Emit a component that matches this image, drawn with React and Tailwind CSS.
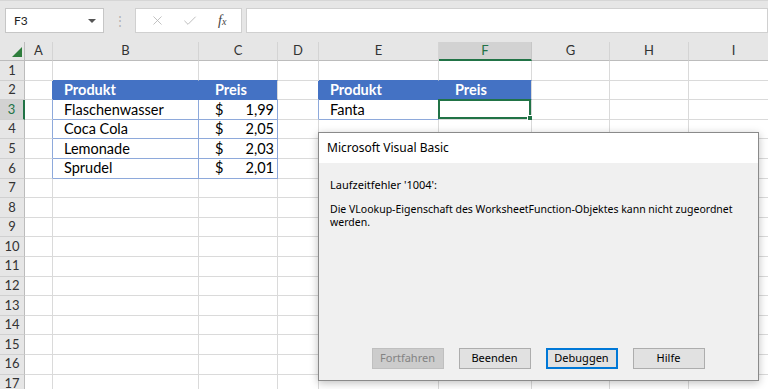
import React from "react";
import { X, Check } from "lucide-react";

const cols = [
  { key: "A", w: "w-[28px]" },
  { key: "B", w: "w-[146px]" },
  { key: "C", w: "w-[79px]" },
  { key: "D", w: "w-[41px]" },
  { key: "E", w: "w-[120px]" },
  { key: "F", w: "w-[93px]" },
  { key: "G", w: "w-[78px]" },
  { key: "H", w: "w-[79px]" },
  { key: "I", w: "w-[90px]" },
];

const produkte = {
  3: ["Flaschenwasser", "1,99"],
  4: ["Coca Cola", "2,05"],
  5: ["Lemonade", "2,03"],
  6: ["Sprudel", "2,01"],
};

function cellStyle(r, key) {
  // Standard-Gitternetz
  let bg = "bg-white";
  let right = "border-r-[#dadada]";
  let bottom = "border-b-[#dadada]";

  if (r === 2 && (key === "B" || key === "C" || key === "E" || key === "F")) {
    bg = "bg-[#4472c4]";
    right = key === "B" || key === "E" ? "border-r-[#4472c4]" : "border-r-[#dadada]";
    bottom = "border-b-[#4472c4]";
  }
  if (r >= 3 && r <= 6) {
    if (key === "A" || key === "B" || key === "C") right = "border-r-[#8ea9db]";
    if (key === "B" || key === "C") bottom = "border-b-[#8ea9db]";
  }
  if (r === 3) {
    if (key === "D" || key === "E") right = "border-r-[#8ea9db]";
    if (key === "E") bottom = "border-b-[#8ea9db]";
  }
  if (r === 2 && key === "A") right = "border-r-[#4472c4]";
  if (r === 2 && key === "D") right = "border-r-[#4472c4]";
  if (r === 1 && (key === "B" || key === "C" || key === "E" || key === "F")) bottom = "border-b-[#4472c4]";

  return `border-r border-b ${right} ${bottom} ${bg}`;
}

function CellContent({ r, keyName }) {
  if (r === 2 && (keyName === "B" || keyName === "E")) {
    return <span className="pl-[11px] font-bold text-white">Produkt</span>;
  }
  if (r === 2 && (keyName === "C" || keyName === "F")) {
    return <span className="pl-[16px] font-bold text-white">Preis</span>;
  }
  if (produkte[r] && keyName === "B") {
    return <span className="pl-[11px] text-black">{produkte[r][0]}</span>;
  }
  if (produkte[r] && keyName === "C") {
    return (
      <div className="flex w-full justify-between pl-[16px] pr-[3px] text-black">
        <span>$</span>
        <span>{produkte[r][1]}</span>
      </div>
    );
  }
  if (r === 3 && keyName === "E") {
    return <span className="pl-[11px] text-black">Fanta</span>;
  }
  if (r === 3 && keyName === "F") {
    return (
      <div className="absolute -left-[1px] -top-[1px] h-[calc(100%+1px)] w-[calc(100%+1px)] border-2 border-[#217346]">
        <div className="absolute -bottom-[4px] -right-[4px] h-[6px] w-[6px] border border-white bg-[#217346]" />
      </div>
    );
  }
  return null;
}

function Toolbar() {
  return (
    <div className="flex h-[42px] items-start border-t border-[#d6d6d6] bg-[#e6e6e6] pt-[7px]">
      <div className="ml-[5px] flex h-[25px] w-[99px] items-center justify-between border border-[#c6c6c6] bg-white pl-[8px] pr-[7px] text-[12px] text-[#222]">
        <span>F3</span>
        <span className="h-0 w-0 border-x-[4px] border-t-[4px] border-x-transparent border-t-[#555]" />
      </div>
      <div className="flex h-[25px] w-[31px] items-center justify-center text-[12px] text-[#b0b0b0]">⋮</div>
      <div className="flex h-[25px] w-[107px] items-center border border-[#d0d0d0] bg-white pl-[14px] text-[#b4b4b4]">
        <X size={15} strokeWidth={1.3} />
        <Check size={16} strokeWidth={1.3} className="ml-[17px]" />
        <span className="ml-[20px] font-['Liberation_Serif',serif] text-[14px] italic text-[#444]">
          f<span className="text-[10px]">x</span>
        </span>
      </div>
      <div className="ml-[4px] h-[25px] flex-1 border border-[#d0d0d0] bg-white" />
    </div>
  );
}

function ColumnHeader() {
  return (
    <div className="flex h-[19px] bg-[#e6e6e6]">
      <div className="flex w-[25px] shrink-0 items-end justify-end border-r border-b border-[#bcbcbc] pb-[3px] pr-[2px]">
        <svg width="10" height="10" viewBox="0 0 10 10">
          <polygon points="10,0 10,10 0,10" fill="#2e7d3c" />
        </svg>
      </div>
      {cols.map((c) =>
        c.key === "F" ? (
          <div
            key={c.key}
            className={`${c.w} flex shrink-0 items-center justify-center border-r border-b-2 border-r-[#c6c6c6] border-b-[#217346] bg-[#d2d2d2] text-[13px] text-[#217346]`}
          >
            {c.key}
          </div>
        ) : (
          <div
            key={c.key}
            className={`${c.w} flex shrink-0 items-center justify-center border-r border-b border-r-[#d4d4d4] border-b-[#bcbcbc] text-[13px] text-[#333]`}
          >
            {c.key}
          </div>
        )
      )}
    </div>
  );
}

function Row({ r }) {
  const selected = r === 3;
  return (
    <div className="flex h-[19.6px] shrink-0">
      <div
        className={
          selected
            ? "flex w-[25px] shrink-0 items-center justify-center border-b border-r-2 border-b-[#d0d0d0] border-r-[#217346] bg-[#d2d2d2] text-[13px] text-[#217346]"
            : "flex w-[25px] shrink-0 items-center justify-center border-b border-r border-b-[#d0d0d0] border-r-[#bcbcbc] bg-[#e6e6e6] text-[13px] text-[#333]"
        }
      >
        {r}
      </div>
      {cols.map((c) => (
        <div
          key={c.key}
          className={`${c.w} relative flex shrink-0 items-center ${cellStyle(r, c.key)}`}
        >
          <CellContent r={r} keyName={c.key} />
        </div>
      ))}
    </div>
  );
}

function FehlerDialog() {
  return (
    <div className="absolute left-[318px] top-[132px] flex h-[249px] w-[441px] flex-col border border-[#8a8a8a] bg-[#f0f0f0] font-['Noto_Sans',sans-serif] text-[11px] text-black shadow-[0_2px_8px_rgba(0,0,0,0.25)]">
      <div className="flex h-[30px] items-center bg-white pl-[8px] text-[12px]">Microsoft Visual Basic</div>
      <div className="flex flex-1 flex-col pl-[11px] pt-[15px]">
        <p className="leading-[14px]">Laufzeitfehler '1004':</p>
        <p className="mt-[11px] pr-[22px] text-[10.5px] leading-[13px]">
          Die VLookup-Eigenschaft des WorksheetFunction-Objektes kann nicht zugeordnet werden.
        </p>
      </div>
      <div className="flex justify-center gap-[15px] pb-[11px] pr-[1px]">
        <button className="h-[21px] w-[72px] border border-[#bfbfbf] bg-[#cccccc] text-[#838383]">Fortfahren</button>
        <button className="h-[21px] w-[72px] border border-[#adadad] bg-[#e1e1e1]">Beenden</button>
        <button className="h-[21px] w-[72px] border-2 border-[#0078d7] bg-[#e1e1e1]">Debuggen</button>
        <button className="h-[21px] w-[72px] border border-[#adadad] bg-[#e1e1e1]">Hilfe</button>
      </div>
    </div>
  );
}

export default function App() {
  const rows = Array.from({ length: 17 }, (_, i) => i + 1);
  return (
    <div className="relative h-[389px] w-[768px] overflow-hidden bg-white font-['Lato',sans-serif] text-[14.5px]">
      <Toolbar />
      <ColumnHeader />
      <div className="flex flex-col">
        {rows.map((r) => (
          <Row key={r} r={r} />
        ))}
      </div>
      <FehlerDialog />
    </div>
  );
}
